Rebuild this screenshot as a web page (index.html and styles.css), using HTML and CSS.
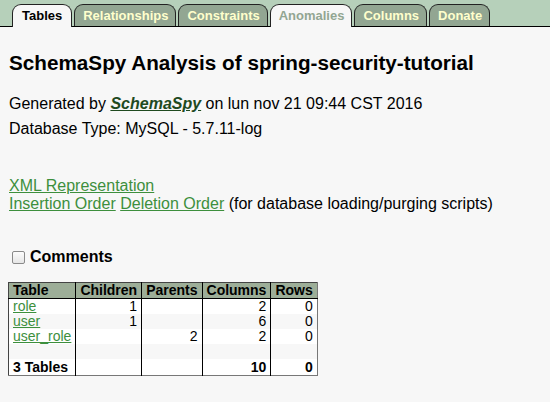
FILE: index.html
```html
<!DOCTYPE html>
<html>
<head>
<meta charset="utf-8">
<link rel="stylesheet" href="styles.css">
</head>
<body>
<div class="header">
  <ul class="tabs">
    <li class="tab active">Tables</li>
    <li class="tab">Relationships</li>
    <li class="tab">Constraints</li>
    <li class="tab disabled">Anomalies</li>
    <li class="tab">Columns</li>
    <li class="tab">Donate</li>
  </ul>
</div>
<div class="content">
  <h1 class="title">SchemaSpy Analysis of spring-security-tutorial</h1>
  <div class="meta">
    <div class="meta-line">Generated by <a class="brand" href="#">SchemaSpy</a> on lun nov 21 09:44 CST 2016</div>
    <div class="meta-line">Database Type: MySQL - 5.7.11-log</div>
  </div>
  <div class="links">
    <div><a href="#">XML Representation</a></div>
    <div><a href="#">Insertion Order</a> <a href="#">Deletion Order</a> (for database loading/purging scripts)</div>
  </div>
  <label class="comments"><span class="box"></span>Comments</label>
  <table class="summary">
    <thead>
      <tr><th class="l">Table</th><th>Children</th><th>Parents</th><th>Columns</th><th>Rows</th></tr>
    </thead>
    <tbody>
      <tr class="odd"><td class="l"><a href="#">role</a></td><td>1</td><td></td><td>2</td><td>0</td></tr>
      <tr class="even"><td class="l"><a href="#">user</a></td><td>1</td><td></td><td>6</td><td>0</td></tr>
      <tr class="odd"><td class="l"><a href="#">user_role</a></td><td></td><td>2</td><td>2</td><td>0</td></tr>
      <tr class="even"><td class="l">&nbsp;</td><td></td><td></td><td></td><td></td></tr>
      <tr class="odd total"><td class="l">3 Tables</td><td></td><td></td><td>10</td><td>0</td></tr>
    </tbody>
  </table>
</div>
</body>
</html>
```

FILE: styles.css
```css
html, body {
  margin: 0;
  padding: 0;
  background: #f7f7f7;
  font-family: "Liberation Sans", Arial, sans-serif;
  color: #000;
}
.header {
  background: #b6d0ba;
  height: 26px;
  border-bottom: 1px solid #000;
  box-sizing: content-box;
}
.tabs {
  list-style: none;
  margin: 0;
  padding: 4px 0 0 12px;
  display: flex;
  gap: 2px;
  height: 22px;
}
.tab {
  height: 22px;
  box-sizing: border-box;
  padding: 3px 7px 0 8px;
  border: 1px solid #222;
  border-bottom: none;
  border-radius: 9px 9px 0 0;
  background: #92a692;
  color: #ffffcc;
  font-size: 13px;
  font-weight: bold;
  line-height: 16px;
}
.tab.active {
  background: #f7f7f7;
  color: #000;
  height: 23px;
  margin-bottom: -1px;
  padding-left: 9px;
  padding-right: 9px;
}
.tab.disabled {
  background: #f7f7f7;
  color: #92a692;
  height: 23px;
  margin-bottom: -1px;
}
.content {
  padding: 0 9px;
}
.title {
  font-size: 20.7px;
  font-weight: bold;
  margin: 24px 0 0 0;
  line-height: 24px;
}
.meta {
  margin-top: 16px;
  font-size: 16px;
}
.meta-line {
  line-height: 25px;
}
a {
  color: #3d8f3d;
}
a.brand {
  color: #1f4a1f;
  font-weight: bold;
  font-style: italic;
}
.links {
  margin-top: 36px;
  font-size: 16px;
  line-height: 18px;
}
.comments {
  display: flex;
  align-items: center;
  gap: 5px;
  margin-top: 35px;
  font-weight: bold;
  font-size: 16px;
  line-height: 18px;
}
.box {
  width: 11px;
  height: 11px;
  margin-left: 3px;
  border: 1px solid #8a8a8a;
  border-radius: 2px;
  background: linear-gradient(#fcfcfc, #e6e6e6);
}
.summary {
  margin-top: 16px;
  margin-left: -1px;
  border-collapse: collapse;
  font-size: 14px;
  border: 1px solid #777;
  border-top-color: #444;
  border-left-color: #444;
}
.summary th, .summary td {
  border-left: 1px solid #000;
  padding: 0 4px 0 4px;
  line-height: 15px;
  text-align: right;
}
.summary th {
  background: #9dae98;
  border-bottom: 1px solid #000;
  font-weight: bold;
}
.summary .l {
  text-align: left;
  border-left: none;
}
.summary tr.odd td { background: #ffffff; }
.summary tr.even td { background: #f7f7f7; }
.summary tr.total td {
  font-weight: bold;
  line-height: 16px;
}
```
